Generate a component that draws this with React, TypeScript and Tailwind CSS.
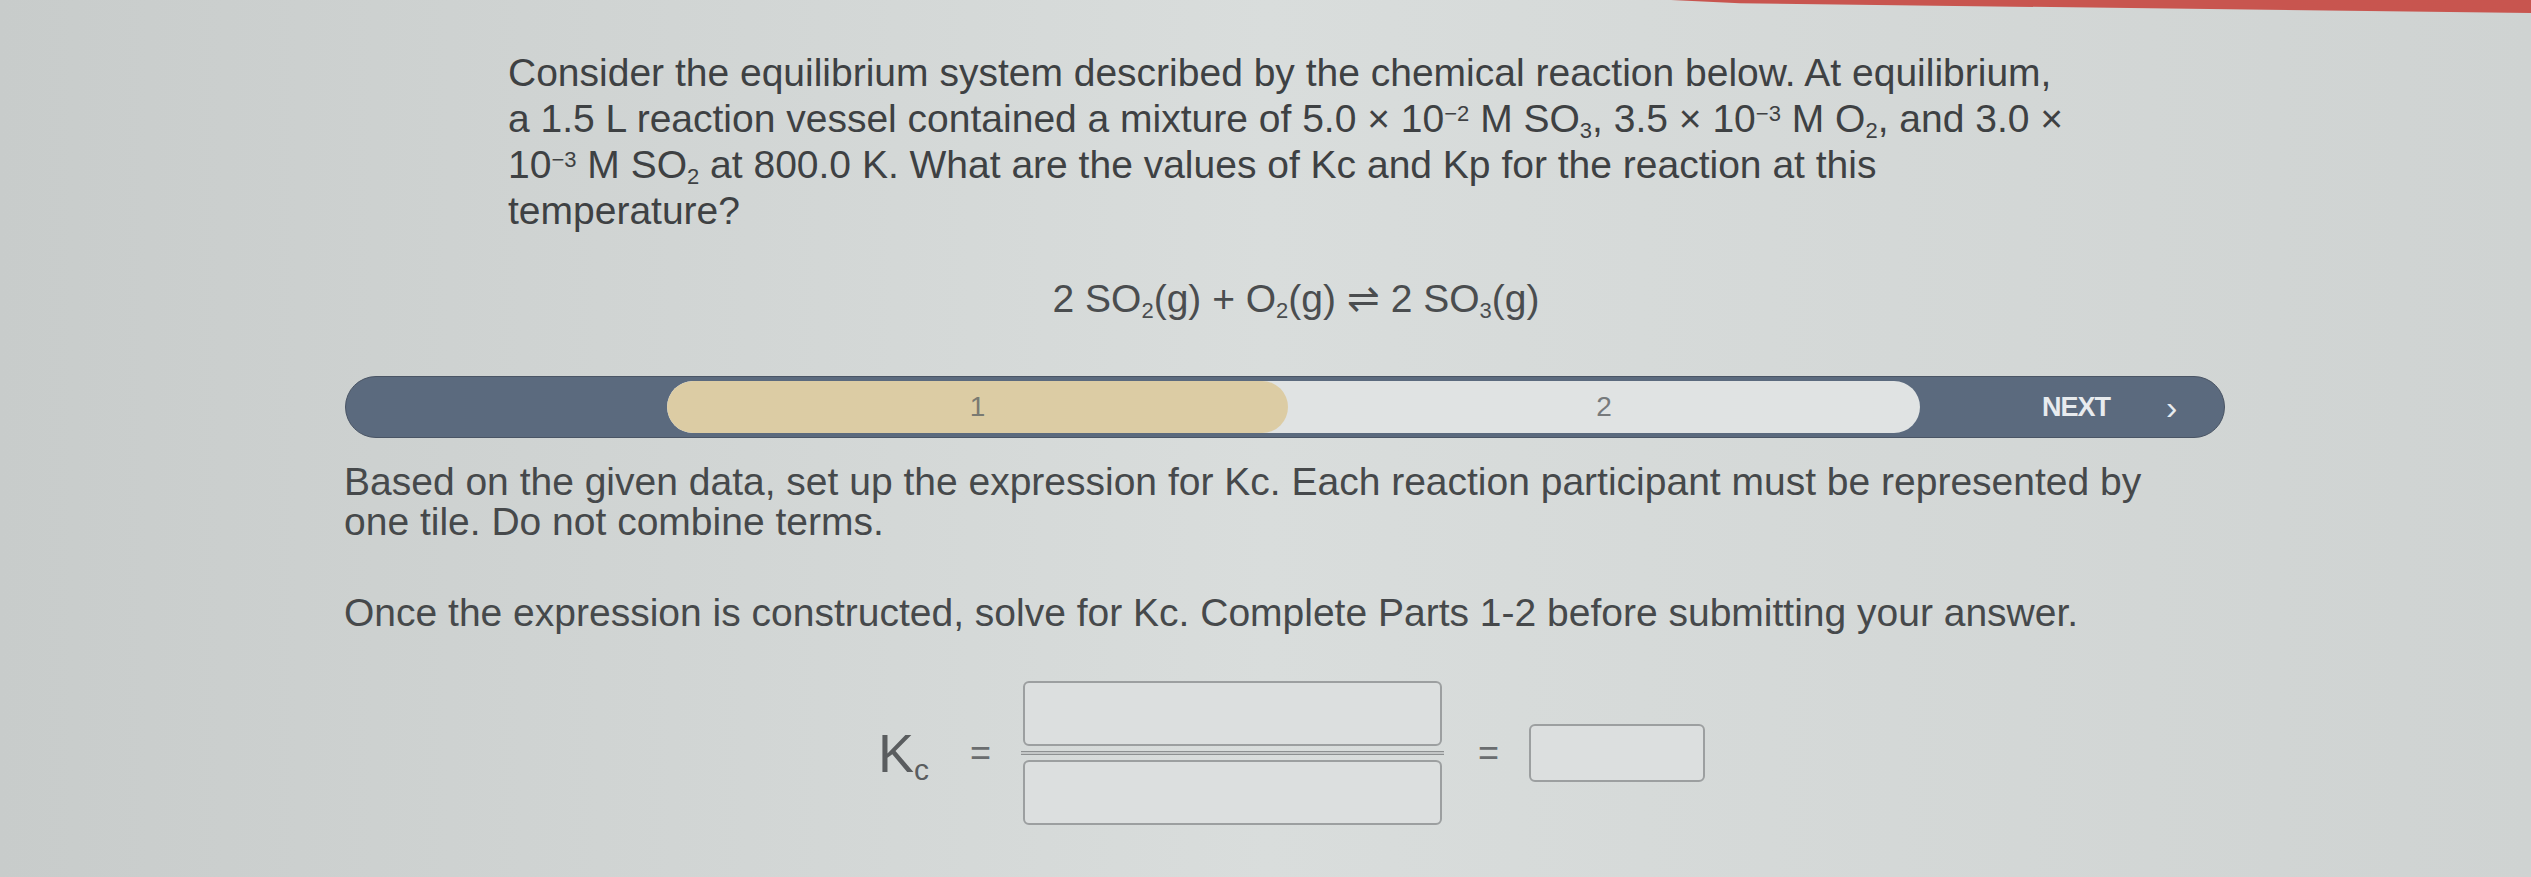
export default function App() {
  return (
    <div className="relative h-[877px] w-full overflow-hidden bg-linear-to-r from-[#c8cccb] via-[#d9dddc] to-[#cfd3d2] font-['Liberation_Sans',Arial,sans-serif] text-[#3e4143]">
      {/* red window edge top right */}
      <div className="absolute top-0 right-0 h-[13px] w-[860px] bg-[#c8554f] [clip-path:polygon(0_0,100%_0,100%_100%,8%_25%)]" />

      {/* Question */}
      <div className="ml-[508px] pt-[50px] text-[39px] leading-[46px]">
        <div>Consider the equilibrium system described by the chemical reaction below. At equilibrium,</div>
        <div>
          a 1.5 L reaction vessel contained a mixture of 5.0 × 10
          <sup className="text-[22px]">−2</sup> M SO<sub className="text-[22px]">3</sub>, 3.5 × 10
          <sup className="text-[22px]">−3</sup> M O<sub className="text-[22px]">2</sub>, and 3.0 ×
        </div>
        <div>
          10<sup className="text-[22px]">−3</sup> M SO<sub className="text-[22px]">2</sub> at 800.0 K. What are the values of Kc and Kp for the reaction at this
        </div>
        <div>temperature?</div>
      </div>

      {/* Equation */}
      <div className="mt-[42px] flex w-[2592px] justify-center text-[39px] leading-[46px] text-[#4a4d4f]">
        <span>
          2 SO<sub className="text-[22px]">2</sub>(g) + O<sub className="text-[22px]">2</sub>(g) ⇌ 2 SO
          <sub className="text-[22px]">3</sub>(g)
        </span>
      </div>

      {/* Progress bar */}
      <div className="mt-[54px] ml-[345px] flex h-[62px] w-[1880px] items-center rounded-full border border-[#4a5565] bg-[#5b6a7e]">
        <div className="w-[321px]" />
        <div className="flex h-[52px] w-[1253px] items-center overflow-hidden rounded-full bg-[#e0e3e3]">
          <div className="flex h-full w-[621px] items-center justify-center rounded-full bg-[#dccca4] text-[28px] text-[#7a7a72]">
            1
          </div>
          <div className="flex h-full flex-1 items-center justify-center text-[28px] text-[#777a7c]">2</div>
        </div>
        <div className="flex flex-1 items-center text-[#e8ebee]">
          <span className="ml-[122px] text-[27px] font-bold tracking-[-1px]">NEXT</span>
          <span className="ml-[56px] text-[34px] leading-none">›</span>
        </div>
      </div>

      {/* Instructions */}
      <div className="mt-[24px] ml-[344px] text-[39px] leading-[40px] text-[#46494b]">
        <div>Based on the given data, set up the expression for Kc. Each reaction participant must be represented by</div>
        <div>one tile. Do not combine terms.</div>
      </div>
      <div className="mt-[51px] ml-[344px] text-[39px] leading-[40px] text-[#46494b]">
        Once the expression is constructed, solve for Kc. Complete Parts 1-2 before submitting your answer.
      </div>

      {/* Kc expression */}
      <div className="mt-[48px] flex items-center">
        <div className="ml-[878px] w-[70px] text-[54px] leading-none font-light text-[#5a5d5f]">
          K<sub className="text-[30px]">c</sub>
        </div>
        <div className="ml-[22px] text-[36px] text-[#6a6d6f]">=</div>
        <div className="ml-[30px] flex flex-col items-center">
          <div className="h-[65px] w-[419px] rounded-md border-2 border-[#9c9fa0] bg-[#dcdfdf]" />
          <div className="my-[5px] h-[4px] w-[423px] border-y border-[#8d9091] bg-[#c4c7c7]" />
          <div className="h-[65px] w-[419px] rounded-md border-2 border-[#9c9fa0] bg-[#dcdfdf]" />
        </div>
        <div className="ml-[34px] text-[36px] text-[#6a6d6f]">=</div>
        <div className="ml-[30px] h-[58px] w-[176px] rounded-md border-2 border-[#9c9fa0] bg-[#dcdfdf]" />
      </div>
    </div>
  )
}
